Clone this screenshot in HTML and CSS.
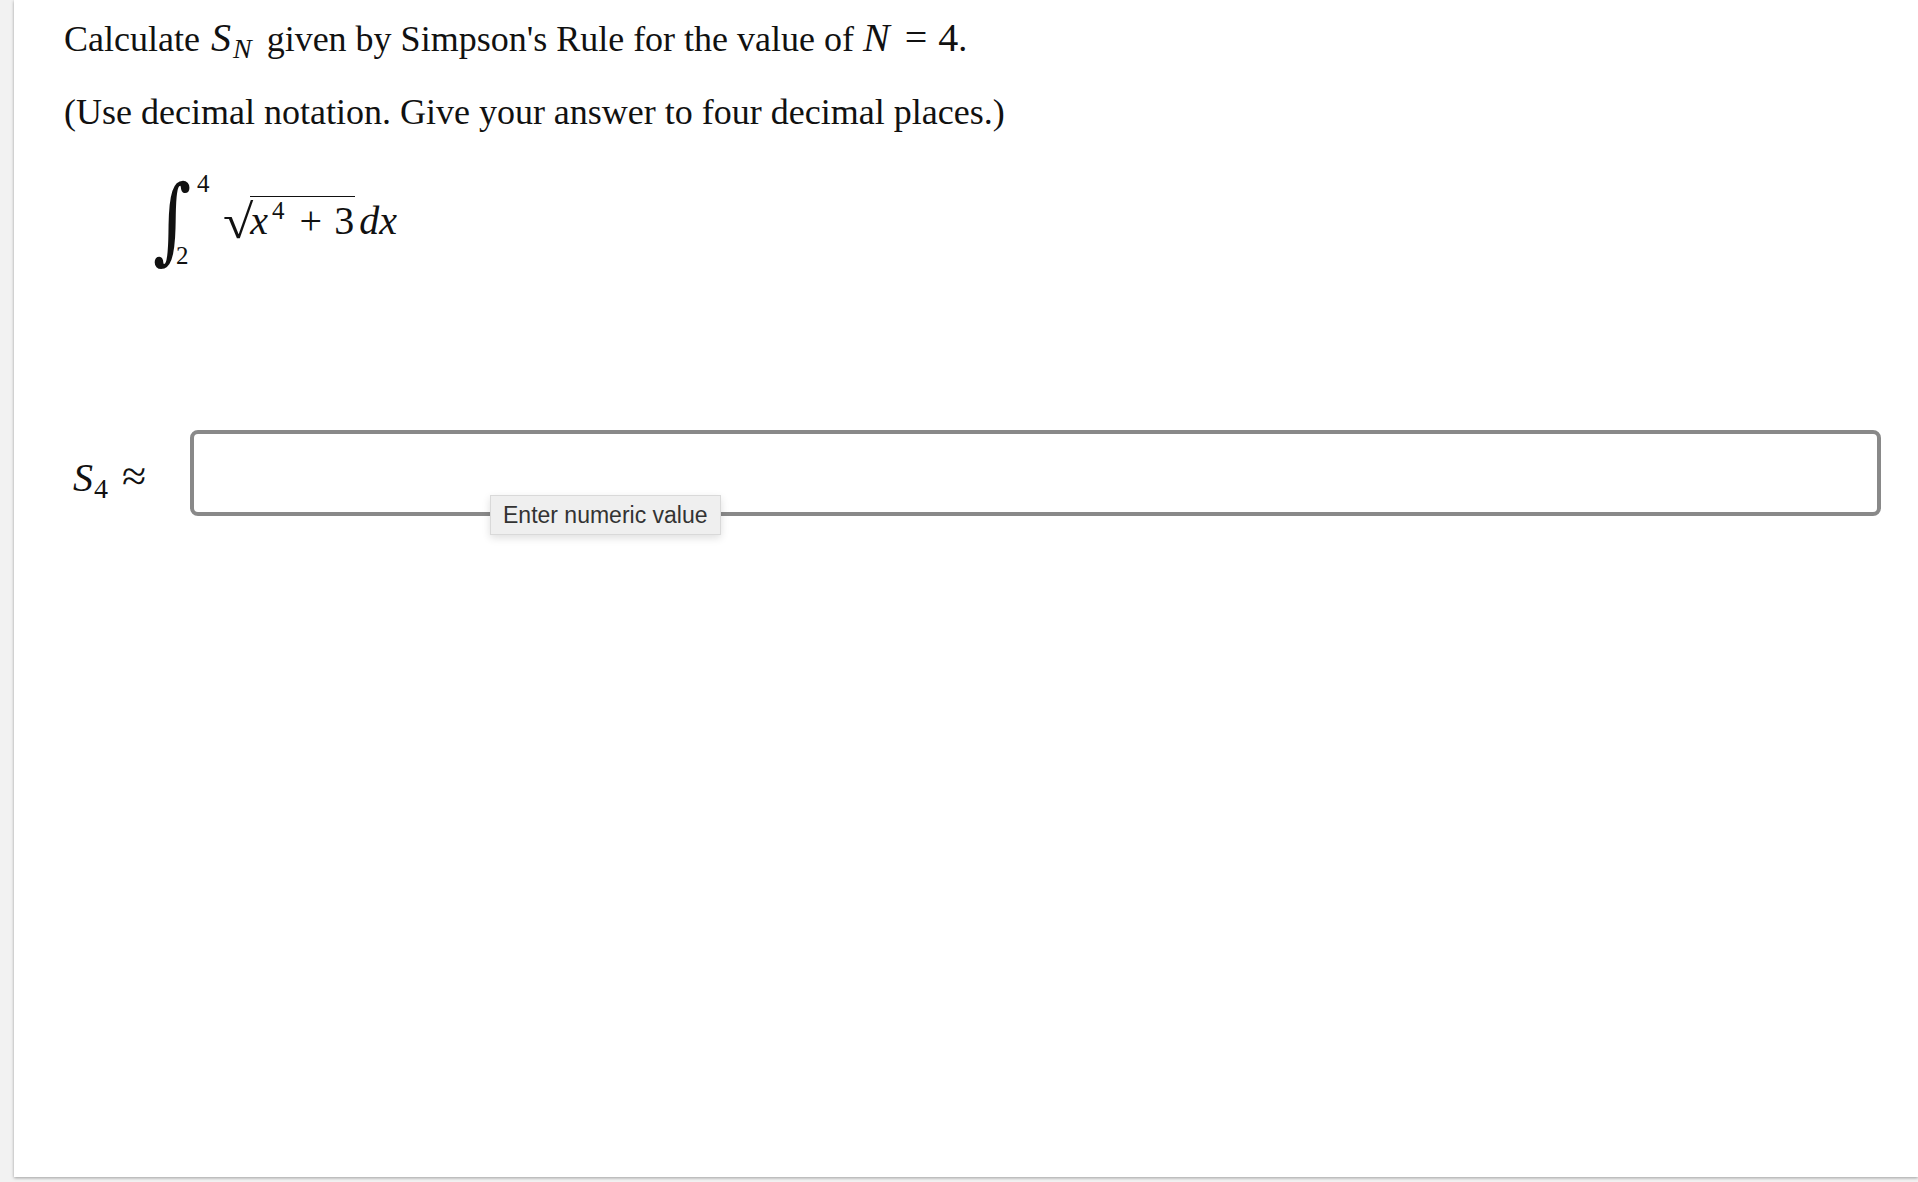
FILE: index.html
```html
<!DOCTYPE html>
<html>
<head>
<meta charset="utf-8">
<link rel="stylesheet" href="styles.css">
</head>
<body>
<div class="panel">
  <p class="line line-first">Calculate <span class="math math-sn"><span class="mi">S</span><sub class="msub">N</sub></span> given by Simpson's Rule for the value of <span class="math"><span class="mi">N</span><span class="mo">=</span>4</span>.</p>
  <p class="line line-second">(Use decimal notation. Give your answer to four decimal places.)</p>
  <div class="integral">
    <span class="int-sign">∫</span>
    <span class="limits">
      <span class="lim-upper">4</span>
      <span class="lim-lower">2</span>
    </span>
    <span class="integrand"><span class="radical">√</span><span class="sqrt-body"><span class="mi">x</span><sup class="msup">4</sup><span class="mo-plus">+</span>3</span><span class="dx"><span class="mi">d</span><span class="mi">x</span></span></span>
  </div>
  <div class="answer-row">
    <span class="answer-label"><span class="mi">S</span><sub class="msub4">4</sub><span class="approx">≈</span></span>
    <div class="answer-field">
      <input class="answer-input" type="text">
      <div class="tooltip">Enter numeric value</div>
    </div>
  </div>
</div>
</body>
</html>
```

FILE: styles.css
```css
html, body {
  margin: 0;
  padding: 0;
  background: #f2f2f2;
  height: 100%;
  overflow: hidden;
}

.panel {
  margin-left: 14px;
  height: 1177px;
  background: #fff;
  box-shadow: 0 1px 3px rgba(0, 0, 0, 0.35);
  padding: 16px 37px 0 50px;
  box-sizing: border-box;
  font-family: "Liberation Serif", "Times New Roman", serif;
  color: #111;
}

.line {
  margin: 0;
  font-size: 36px;
  line-height: 44px;
}

.line-second {
  margin-top: 29px;
}

.math {
  font-size: 40px;
}

.math-sn {
  margin-left: 2px;
  margin-right: 2px;
}

.mi {
  font-style: italic;
}

.msub {
  font-style: italic;
  font-size: 28px;
  vertical-align: -7px;
  line-height: 0;
  margin-left: 2px;
  margin-right: 4px;
}

.mo {
  margin: 0 11px 0 15px;
}

.integral {
  display: flex;
  margin-top: 37px;
  margin-left: 89px;
  height: 100px;
}

.int-sign {
  font-family: "DejaVu Serif", serif;
  font-size: 94px;
  line-height: 98px;
  width: 22px;
  display: block;
  transform: scaleX(0.78);
  transform-origin: left center;
}

.limits {
  display: flex;
  flex-direction: column;
  justify-content: space-between;
  font-size: 25px;
  line-height: 24px;
  width: 48px;
  padding: 1px 0 3px;
}

.lim-upper {
  padding-left: 22px;
}

.lim-lower {
  padding-left: 1px;
}

.integrand {
  font-size: 40px;
  line-height: 44px;
  margin-top: 25px;
  white-space: nowrap;
}

.radical {
  font-size: 48px;
  display: inline-block;
  vertical-align: -4px;
  margin-right: 1px;
  transform: scaleX(1.15);
  transform-origin: left center;
}

.sqrt-body {
  display: inline-block;
  border-top: 1.5px solid #111;
  padding-top: 2px;
  padding-right: 1px;
}

.msup {
  font-size: 25px;
  vertical-align: 15px;
  line-height: 0;
  margin-left: 4px;
}

.mo-plus {
  margin: 0 12px 0 15px;
}

.dx {
  margin-left: 4px;
}

.answer-row {
  display: flex;
  align-items: flex-start;
  margin-top: 159px;
}

.answer-label {
  flex: 0 0 auto;
  width: 117px;
  font-size: 40px;
  line-height: 44px;
  margin-left: 9px;
  margin-top: 25px;
  white-space: nowrap;
}

.msub4 {
  font-size: 28px;
  vertical-align: -7px;
  line-height: 0;
  margin-left: 1px;
}

.approx {
  margin-left: 14px;
  font-size: 44px;
}

.answer-field {
  position: relative;
  flex: 1;
}

.answer-input {
  display: block;
  width: 100%;
  height: 86px;
  box-sizing: border-box;
  border: 4px solid #898989;
  border-radius: 8px;
  background: #fff;
  outline: none;
  font-size: 24px;
}

.tooltip {
  position: absolute;
  left: 300px;
  top: 65px;
  height: 40px;
  box-sizing: border-box;
  padding: 0 12px;
  background: #efefef;
  border: 1px solid #d9d9d9;
  box-shadow: 0 3px 8px rgba(0, 0, 0, 0.13);
  font-family: "Liberation Sans", Arial, sans-serif;
  font-size: 23px;
  line-height: 38px;
  color: #333;
  white-space: nowrap;
}
```
